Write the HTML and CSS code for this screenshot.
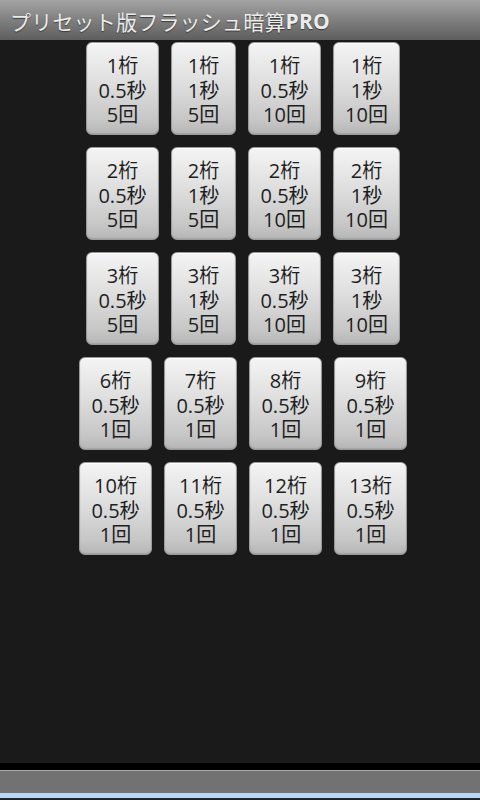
FILE: index.html
```html
<!DOCTYPE html>
<html lang="ja">
<head>
<meta charset="utf-8">
<title>プリセット版フラッシュ暗算PRO</title>
<link rel="stylesheet" href="styles.css">
</head>
<body>
<div class="screen">
  <header class="titlebar">プリセット版フラッシュ暗算<b>PRO</b></header>
  <main class="content">
    <div class="row">
      <button class="btn w73">1桁<br>0.5秒<br>5回</button>
      <button class="btn w65">1桁<br>1秒<br>5回</button>
      <button class="btn w73">1桁<br>0.5秒<br>10回</button>
      <button class="btn w67">1桁<br>1秒<br>10回</button>
    </div>
    <div class="row">
      <button class="btn w73">2桁<br>0.5秒<br>5回</button>
      <button class="btn w65">2桁<br>1秒<br>5回</button>
      <button class="btn w73">2桁<br>0.5秒<br>10回</button>
      <button class="btn w67">2桁<br>1秒<br>10回</button>
    </div>
    <div class="row">
      <button class="btn w73">3桁<br>0.5秒<br>5回</button>
      <button class="btn w65">3桁<br>1秒<br>5回</button>
      <button class="btn w73">3桁<br>0.5秒<br>10回</button>
      <button class="btn w67">3桁<br>1秒<br>10回</button>
    </div>
    <div class="row">
      <button class="btn w73">6桁<br>0.5秒<br>1回</button>
      <button class="btn w73">7桁<br>0.5秒<br>1回</button>
      <button class="btn w73">8桁<br>0.5秒<br>1回</button>
      <button class="btn w73">9桁<br>0.5秒<br>1回</button>
    </div>
    <div class="row">
      <button class="btn w73">10桁<br>0.5秒<br>1回</button>
      <button class="btn w73">11桁<br>0.5秒<br>1回</button>
      <button class="btn w73">12桁<br>0.5秒<br>1回</button>
      <button class="btn w73">13桁<br>0.5秒<br>1回</button>
    </div>
  </main>
  <footer class="bottom">
    <div class="gap"></div>
    <div class="bar"></div>
    <div class="blue"></div>
  </footer>
</div>
</body>
</html>
```
FILE: styles.css
```css
html, body {
  margin: 0;
  padding: 0;
  background: #000;
}
.screen {
  width: 480px;
  height: 800px;
  display: flex;
  flex-direction: column;
  font-family: "Open Sans", "Noto Sans CJK JP", sans-serif;
}
.titlebar {
  height: 40px;
  box-sizing: border-box;
  padding-left: 10px;
  padding-top: 1px;
  display: flex;
  align-items: center;
  font-family: "Noto Sans CJK JP", sans-serif;
  font-size: 21px;
  color: #ececec;
  text-shadow: 0 1px 1px #3a3a3a;
  background: linear-gradient(#a4a4a4, #7c7c7c 55%, #5e5e5e);
  letter-spacing: 0.2px;
}
.titlebar b {
  font-family: "Open Sans", sans-serif;
  font-weight: 700;
}
.content {
  flex: 1;
  background: #1a1a1a;
  padding-top: 2px;
  display: flex;
  flex-direction: column;
  gap: 12px;
}
.row {
  display: flex;
  justify-content: center;
  gap: 12px;
  padding-left: 6px;
}
.btn {
  height: 93px;
  padding: 5px 0 0;
  margin: 0;
  border: 1px solid #9a9a9a;
  border-radius: 6px;
  background: linear-gradient(#f4f4f4, #dedede 45%, #c6c6c6 85%, #b6b6b6);
  box-shadow: inset 0 1px 0 #ffffff, inset 0 -1px 1px #a4a4a4;
  color: #1e1e1e;
  font-family: "Open Sans", "Noto Sans CJK JP", sans-serif;
  font-size: 20px;
  line-height: 24.5px;
  text-align: center;
}
.w73 { width: 73px; }
.w65 { width: 65px; }
.w67 { width: 67px; }
.bottom {
  display: flex;
  flex-direction: column;
}
.gap {
  height: 7px;
  background: #000;
}
.bar {
  height: 22px;
  background: #727272;
  border-top: 1px solid #a8a8a8;
}
.blue {
  height: 5px;
  background: #b8d8f2;
  border-bottom: 2px solid #1c2430;
}
```
